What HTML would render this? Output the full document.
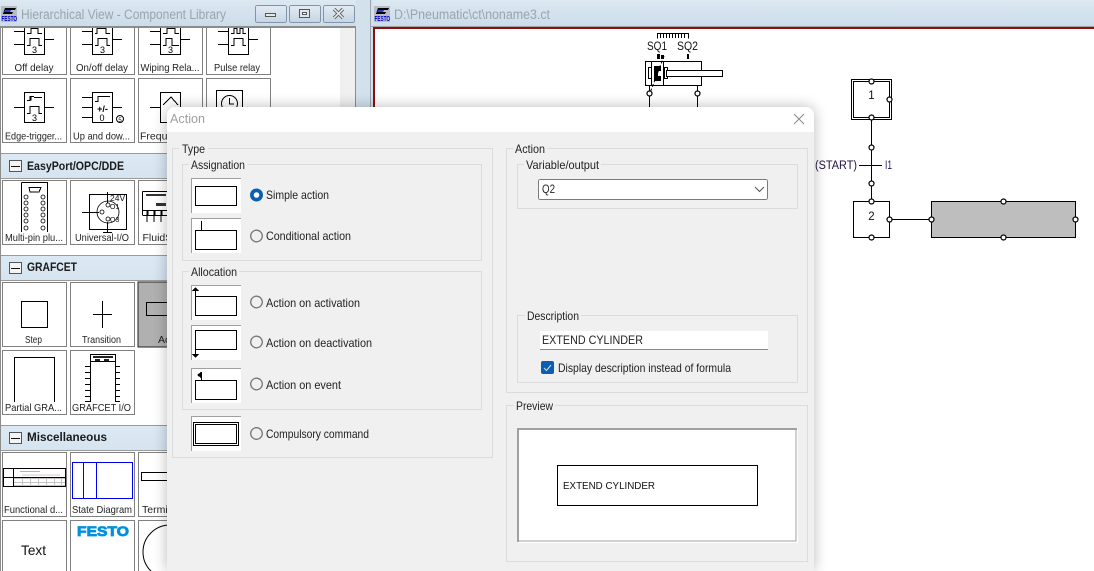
<!DOCTYPE html>
<html><head><meta charset="utf-8">
<style>
html,body{margin:0;padding:0;width:1094px;height:571px;overflow:hidden;background:#fff}
#root{position:absolute;left:0;top:0;width:1094px;height:571px;overflow:hidden}
svg{position:absolute;left:0;top:0}
text{font-family:"Liberation Sans",sans-serif;fill:#111}
.l{font-size:10.5px;text-anchor:middle;fill:#222}
.h{font-size:11.5px;font-weight:bold;fill:#1a1a1a}
.t{font-size:13.5px;fill:#9aa4ac}
.d{font-size:12px;fill:#222}
.w{fill:none;stroke:#000;stroke-width:1}
.s{font-size:9px;fill:#000;text-anchor:middle}
.c{fill:#fff;stroke:#808080;stroke-width:1}
.g{fill:none;stroke:#dcdcdc;stroke-width:1}
.o{fill:#fff;stroke:#000;stroke-width:1}
.p{fill:#fff;stroke:#000;stroke-width:1.2}
.bk{fill:#f0f0f0}
.ic{fill:#fff}
.b{fill:none;stroke:#a0a0a0;stroke-width:1}
.rd{fill:#f0f0f0;stroke:#777;stroke-width:1.3}
#dlg{position:absolute;left:167px;top:107px;width:647px;height:464px;background:#f0f0f0;border-radius:8px 8px 0 0;box-shadow:0 0 14px rgba(0,0,0,.28)}
#dlg div{position:absolute;left:0;top:0;width:647px;height:25px;background:#fff;border-radius:8px 8px 0 0}
</style></head>
<body>
<div id="root">
<svg width="1094" height="571" viewBox="0 0 1094 571" shape-rendering="crispEdges">
<defs>
<linearGradient id="tb" x1="0" y1="0" x2="0" y2="1"><stop offset="0" stop-color="#dce8f2"/><stop offset="1" stop-color="#cbdcea"/></linearGradient>
<linearGradient id="hd" x1="0" y1="0" x2="0" y2="1"><stop offset="0" stop-color="#dce9f4"/><stop offset="1" stop-color="#d6e4f0"/></linearGradient>
<linearGradient id="bt" x1="0" y1="0" x2="0" y2="1"><stop offset="0" stop-color="#e2ebf3"/><stop offset="1" stop-color="#c5d5e4"/></linearGradient>
</defs>
<!-- frames -->
<rect x="0" y="0" width="1094" height="27" fill="url(#tb)"/>
<rect x="356" y="0" width="17" height="571" fill="#d3e1ed"/>
<rect x="0" y="27" width="356" height="544" fill="#fff"/>
<rect x="340" y="28" width="16" height="543" fill="#f0f0f0"/>
<rect x="0" y="26" width="356" height="2" fill="#8c8c8c"/>
<rect x="0" y="27" width="1" height="544" fill="#8c8c8c"/>
<rect x="355" y="27" width="1" height="544" fill="#8c8c8c"/>
<rect x="370" y="0" width="1" height="571" fill="#9aa5ae"/>
<rect x="371" y="26" width="723" height="1" fill="#a0a0a0"/>
<rect x="373" y="27" width="721" height="544" fill="#fff"/>
<rect x="373" y="27" width="721" height="2" fill="#8b0f0f"/>
<rect x="373" y="27" width="2" height="544" fill="#8b0f0f"/>

<!-- logos -->
<g>
<rect x="1" y="6" width="16" height="16" fill="#b8bcc2"/>
<path d="M5 8H16L15 10H8L7 12H13L12 14H3L5 8Z" fill="#000"/>
<path d="M5 10H11L10 12H4Z" fill="#2040c0"/>
<text x="1.5" y="21" font-size="7" font-weight="bold" style="fill:#0000d0" textLength="15.5" lengthAdjust="spacingAndGlyphs">FESTO</text>
<g transform="translate(373,0)">
<rect x="1" y="6" width="16" height="16" fill="#b8bcc2"/>
<path d="M5 8H16L15 10H8L7 12H13L12 14H3L5 8Z" fill="#000"/>
<path d="M5 10H11L10 12H4Z" fill="#2040c0"/>
<text x="1.5" y="21" font-size="7" font-weight="bold" style="fill:#0000d0" textLength="15.5" lengthAdjust="spacingAndGlyphs">FESTO</text>
</g>
</g>
<text class="t" x="21" y="19" textLength="205" lengthAdjust="spacingAndGlyphs">Hierarchical View - Component Library</text>
<text class="t" x="394" y="19" textLength="156" lengthAdjust="spacingAndGlyphs">D:\Pneumatic\ct\noname3.ct</text>
<!-- window buttons -->
<rect x="255.500" y="5.500" width="31" height="17" rx="2" fill="url(#bt)" stroke="#8393a8"/>
<rect x="289.500" y="5.500" width="31" height="17" rx="2" fill="url(#bt)" stroke="#8393a8"/>
<rect x="323.500" y="5.500" width="31" height="17" rx="2" fill="url(#bt)" stroke="#8393a8"/>
<rect x="265.500" y="13.500" width="10" height="3" fill="#e8e8e8" stroke="#555"/>
<rect x="299.500" y="9.500" width="10" height="8" fill="#dfe6ec" stroke="#555"/>
<rect x="302.500" y="12.500" width="4" height="2" fill="#fff" stroke="#555"/>
<path d="M334 9L343 18M343 9L334 18" stroke="#666" stroke-width="3.400" fill="none" shape-rendering="auto"/>
<path d="M334 9L343 18M343 9L334 18" stroke="#eee" stroke-width="1.500" fill="none" shape-rendering="auto"/>

<!-- row 1 -->
<g id="cells">
<path class="c" d="M2.500 28V74.500H66.500V28M70.500 28V74.500H134.500V28M138.500 28V74.500H202.500V28M206.500 28V74.500H270.500V28"/>
<rect class="c" x="2.500" y="78.500" width="64" height="64"/>
<rect class="c" x="70.500" y="78.500" width="64" height="64"/>
<rect class="c" x="138.500" y="78.500" width="64" height="64"/>
<rect class="c" x="206.500" y="78.500" width="64" height="64"/>

<path class="w" d="M24.500 28V54.500H44.500V28M14 31.500H24M14 44.500H24M45 39.500H54M27 33.500H31V28.500H38V33.500H42M27 45.500H30V38.500H39V45.500H42"/>
<text class="s" x="34.500" y="53">3</text>
<path class="w" d="M92.500 28V54.500H112.500V28M82 31.500H92M82 44.500H92M113 39.500H122M95 33.500H97V28.500H106V33.500H110M95 45.500H98V38.500H107V45.500H110"/>
<text class="s" x="102.500" y="53">3</text>
<path class="w" d="M160.500 28V54.500H180.500V28M150 31.500H160M150 44.500H160M181 39.500H190M163 33.500H167V28.500H175V33.500H179M163 45.500H166V38.500H172V45.500H179"/>
<text class="s" x="170.500" y="53">3</text>
<path class="w" d="M228.500 28V54.500H248.500V28M218 31.500H228M218 44.500H228M249 39.500H258M231 33.500H234V28.500H237V33.500H240V28.500H243V33.500H246M231 45.500H234V38.500H243V45.500H246"/>

<text class="l" x="34" y="71" textLength="39" lengthAdjust="spacingAndGlyphs">Off delay</text>
<text class="l" x="102" y="71" textLength="52" lengthAdjust="spacingAndGlyphs">On/off delay</text>
<text class="l" x="170" y="71" textLength="59" lengthAdjust="spacingAndGlyphs">Wiping Rela...</text>
<text class="l" x="237" y="71" textLength="46" lengthAdjust="spacingAndGlyphs">Pulse relay</text>

<path class="w" d="M24.500 92.500H44.500V122.500H24.500ZM14 107.500H24M45 107.500H54M27 100.500H30V96.500H34M31 96.500V100.500M34 97.500H42M27 113.500H30V106.500H39V113.500H42"/>
<text class="s" x="34.500" y="121">3</text>
<path class="w" d="M92.500 92.500H112.500V122.500H92.500ZM82 97.500H92M82 107.500H92M82 117.500H92M113 107.500H122M95 101.500H98V96.500H110"/>
<text class="s" x="102.500" y="112" font-weight="bold">+/-</text>
<text class="s" x="102" y="121">0</text>
<circle cx="120" cy="119" r="3.500" fill="none" stroke="#000" shape-rendering="auto"/>
<text x="120" y="122" font-size="6" text-anchor="middle">5</text>
<path class="w" d="M160.500 92.500H180.500V122.500H160.500ZM150 107.500H160M163 105L171 97L178 105"/>
<rect class="o" x="216.500" y="90.500" width="26" height="30"/>
<circle cx="229.500" cy="103.500" r="8" fill="none" stroke="#000" shape-rendering="auto"/>
<path class="w" d="M229.500 98V104H234"/>
<text class="l" x="33.500" y="139.500" textLength="57" lengthAdjust="spacingAndGlyphs">Edge-trigger...</text>
<text class="l" x="101.500" y="139.500" textLength="57" lengthAdjust="spacingAndGlyphs">Up and dow...</text>
<text class="l" x="140" y="139.500" style="text-anchor:start">Frequency...</text>

<!-- EasyPort header -->
<rect x="1" y="153" width="339" height="26" fill="url(#hd)"/>
<path d="M1 153.500H340M1 178.500H340" stroke="#9a9a9a"/>
<rect x="9.500" y="160.500" width="12" height="11" fill="#f4f4f4" stroke="#555"/>
<path d="M11 166.500H20" stroke="#111"/>
<text class="h" x="27" y="170" textLength="97" lengthAdjust="spacingAndGlyphs">EasyPort/OPC/DDE</text>

<rect class="c" x="2.500" y="180.500" width="64" height="64"/>
<rect class="c" x="70.500" y="180.500" width="64" height="64"/>
<rect class="c" x="138.500" y="180.500" width="64" height="64"/>
<path class="w" d="M21.500 182.500H47.500V232M21.500 182.500V232M29 187.500H41L39 192H30Z"/>
<g fill="none" stroke="#000" stroke-width=".8" shape-rendering="auto">
<circle cx="26" cy="197" r="2"/><circle cx="26" cy="203" r="2"/><circle cx="26" cy="209" r="2"/><circle cx="26" cy="215" r="2"/><circle cx="26" cy="221" r="2"/><circle cx="26" cy="228" r="2"/>
<circle cx="43" cy="197" r="2"/><circle cx="43" cy="203" r="2"/><circle cx="43" cy="209" r="2"/><circle cx="43" cy="215" r="2"/><circle cx="43" cy="221" r="2"/><circle cx="43" cy="228" r="2"/>
<circle cx="108" cy="212" r="11"/><circle cx="102" cy="212" r="2"/><circle cx="108" cy="205" r="2"/><circle cx="108" cy="219" r="2"/>
</g>
<path class="w" d="M89.500 194.500H126.500V229.500H89.500ZM82 212.500H99M107.500 192V203M107.500 222V232M103 232.500H112"/>
<text x="110" y="201" font-size="8.500">24V</text>
<text x="110" y="209" font-size="7">O1</text>
<text x="110" y="222" font-size="7">O3</text>
<text class="l" x="34" y="241" textLength="58" lengthAdjust="spacingAndGlyphs">Multi-pin plu...</text>
<text class="l" x="102" y="241" textLength="54" lengthAdjust="spacingAndGlyphs">Universal-I/O</text>
<text class="l" x="142.500" y="241" style="text-anchor:start">FluidSIM</text>
<path class="w" d="M142.500 191.500H167M142.500 191.500V215M142.500 215.500H167M142.500 210.500H167M147 211V222M154 211V222M161 211V222M148 210V215M155 210V215M162 210V215"/>
<rect x="146" y="194" width="20" height="2" fill="#333"/>
<rect x="156" y="203" width="10" height="3" fill="#333"/>

<!-- GRAFCET -->
<rect x="1" y="255" width="339" height="26" fill="url(#hd)"/>
<path d="M1 255.500H340M1 280.500H340" stroke="#9a9a9a"/>
<rect x="9.500" y="262.500" width="12" height="11" fill="#f4f4f4" stroke="#555"/>
<path d="M11 268.500H20" stroke="#111"/>
<text class="h" x="27" y="271" textLength="50" lengthAdjust="spacingAndGlyphs">GRAFCET</text>
<rect class="c" x="2.500" y="282.500" width="64" height="64"/>
<rect class="c" x="70.500" y="282.500" width="64" height="64"/>
<rect x="138" y="282" width="65" height="65" fill="#b0b0b0" stroke="#222"/>
<rect class="o" x="21.500" y="301.500" width="26" height="26"/>
<path class="w" d="M102.500 301V328M93 314.500H112"/>
<rect x="146.500" y="302.500" width="40" height="13" fill="#b0b0b0" stroke="#000"/>
<text class="l" x="33.500" y="343" textLength="17" lengthAdjust="spacingAndGlyphs">Step</text>
<text class="l" x="101.500" y="343" textLength="39" lengthAdjust="spacingAndGlyphs">Transition</text>
<text class="l" x="158" y="343" style="text-anchor:start">Action</text>
<rect class="c" x="2.500" y="350.500" width="64" height="64"/>
<rect class="c" x="70.500" y="350.500" width="64" height="64"/>
<path class="w" d="M14.500 402V357.500H54.500V402"/>
<path class="w" d="M90.500 402V354.500H115.500V402M90.500 361.500H115.500M85 366.500H90M85 372.500H90M85 378.500H90M85 384.500H90M85 390.500H90M85 396.500H90M85 401.500H90M115 366.500H120M115 372.500H120M115 378.500H120M115 384.500H120M115 390.500H120M115 396.500H120M115 401.500H120"/>
<rect x="93" y="356" width="20" height="2" fill="#222"/>
<rect x="95" y="359" width="5" height="2" fill="#222"/>
<rect x="104" y="359" width="5" height="2" fill="#222"/>
<text class="l" x="33.500" y="411" textLength="57" lengthAdjust="spacingAndGlyphs">Partial GRA...</text>
<text class="l" x="101.500" y="411" textLength="59" lengthAdjust="spacingAndGlyphs">GRAFCET I/O</text>

<!-- Misc -->
<rect x="1" y="425" width="339" height="26" fill="url(#hd)"/>
<path d="M1 425.500H340M1 450.500H340" stroke="#9a9a9a"/>
<rect x="9.500" y="432.500" width="12" height="11" fill="#f4f4f4" stroke="#555"/>
<path d="M11 438.500H20" stroke="#111"/>
<text class="h" x="27" y="441" textLength="80" lengthAdjust="spacingAndGlyphs">Miscellaneous</text>
<rect class="c" x="2.500" y="452.500" width="64" height="64"/>
<rect class="c" x="70.500" y="452.500" width="64" height="64"/>
<rect class="c" x="138.500" y="452.500" width="64" height="64"/>
<path d="M14 482.500H65M14 485.500H65M14 478.500H65M22.500 477V487M30.500 477V487M38.500 477V487M46.500 477V487M54.500 477V487M61.500 477V487" stroke="#c4c4c4" fill="none"/>
<rect x="3.500" y="468.500" width="62" height="18" fill="none" stroke="#000" stroke-width="1"/>
<path d="M3 477.500H66M13.500 468V487" stroke="#000"/>
<rect x="20" y="471" width="20" height="1" fill="#c9a9b9"/>
<rect x="22" y="474.500" width="38" height="1" fill="#d8c8d0"/>
<rect x="72.500" y="462.500" width="60" height="36" fill="none" stroke="#0000f0"/>
<path d="M83.500 462V499M96.500 462V499" stroke="#0000f0"/>
<rect x="141.500" y="472.500" width="40" height="8" class="o"/>
<text class="l" x="33.500" y="513" textLength="59" lengthAdjust="spacingAndGlyphs">Functional d...</text>
<text class="l" x="102" y="513" textLength="60" lengthAdjust="spacingAndGlyphs">State Diagram</text>
<text class="l" x="142" y="513" style="text-anchor:start">Terminal</text>
<path class="c" d="M2.500 571V520.500H66.500V571M70.500 571V520.500H134.500V571M138.500 571V520.500H202.500V571"/>
<text x="21" y="555" font-size="14" textLength="25" lengthAdjust="spacingAndGlyphs">Text</text>
<text x="77" y="536" font-size="13.500" font-weight="bold" style="fill:#0091dc;stroke:#0091dc;stroke-width:.8" textLength="52" lengthAdjust="spacingAndGlyphs">FESTO</text>
<circle cx="170" cy="552" r="27" fill="none" stroke="#000" shape-rendering="auto"/>
</g>

<!-- Canvas: cylinder -->
<path class="w" d="M657.500 38.500V33.500H688.500V38.500M660.500 34V38M663.500 34V38M666.500 34V38M669.500 34V38M672.500 34V38M675.500 34V38M678.500 34V38M681.500 34V38M684.500 34V38"/>
<text x="647" y="50" font-size="12" textLength="20" lengthAdjust="spacingAndGlyphs" style="fill:#111">SQ1</text>
<text x="677" y="50" font-size="12" textLength="21" lengthAdjust="spacingAndGlyphs" style="fill:#111">SQ2</text>
<rect x="657" y="54" width="3" height="5" fill="#000"/>
<rect x="661" y="55" width="3" height="4" fill="#000"/>
<rect x="687" y="54" width="2" height="5" fill="#000"/>
<rect class="o" x="645.500" y="61.500" width="56" height="24"/>
<path class="w" d="M651.500 62V85M663.500 62V85"/>
<rect class="o" x="648.500" y="67.500" width="3" height="11"/>
<rect class="o" x="664.500" y="67.500" width="3" height="11"/>
<rect class="o" x="666.500" y="70.500" width="56" height="6"/>
<path d="M654 66H661V71H658V76H661V81H654Z" fill="#000"/>
<path d="M664 56L650 93" stroke="#000" stroke-dasharray="3 2" shape-rendering="auto"/>
<path class="w" d="M649.500 85V107M697.500 85V107"/>
<g shape-rendering="auto"><circle class="p" cx="649.500" cy="93.500" r="2.500"/><circle class="p" cx="697.500" cy="93.500" r="2.500"/></g>

<!-- GRAFCET diagram -->
<rect class="o" x="851.500" y="79.500" width="40" height="40"/>
<rect class="o" x="853.500" y="81.500" width="36" height="36"/>
<path d="M871.500 118V201" stroke="#000" stroke-width="1"/>
<path class="w" d="M859 165.500H882M889.500 219.500H931.500"/>
<rect class="o" x="853.500" y="201.500" width="36" height="36"/>
<rect x="931.500" y="201.500" width="144" height="36" fill="#bebebe" stroke="#000"/>
<text x="871.500" y="99" font-size="11.500" text-anchor="middle">1</text>
<text x="871.500" y="220" font-size="11.500" text-anchor="middle">2</text>
<text x="815" y="169" font-size="11.500" textLength="42" lengthAdjust="spacingAndGlyphs" style="fill:#201040">(START)</text>
<text x="885" y="169" font-size="11.500" textLength="7" lengthAdjust="spacingAndGlyphs" style="fill:#201060">I1</text>
<g shape-rendering="auto">
<circle class="p" cx="871.500" cy="81.500" r="2.500"/><circle class="p" cx="889.500" cy="99.500" r="2.500"/><circle class="p" cx="871.500" cy="117.500" r="2.500"/>
<circle class="p" cx="871.500" cy="147.500" r="2.500"/><circle class="p" cx="871.500" cy="183.500" r="2.500"/>
<circle class="p" cx="871.500" cy="201.500" r="2.500"/><circle class="p" cx="889.500" cy="219.500" r="2.500"/><circle class="p" cx="871.500" cy="237.500" r="2.500"/>
<circle class="p" cx="931.500" cy="219.500" r="2.500"/><circle class="p" cx="1003.500" cy="201.500" r="2.500"/><circle class="p" cx="1075.500" cy="219.500" r="2.500"/><circle class="p" cx="1003.500" cy="237.500" r="2.500"/>
</g>
</svg>

<div id="dlg"><div></div></div>

<svg width="1094" height="571" viewBox="0 0 1094 571" shape-rendering="crispEdges">
<text x="170" y="123" font-size="13" textLength="35" lengthAdjust="spacingAndGlyphs" style="fill:#9e9e9e">Action</text>
<path d="M794 114L804 124M804 114L794 124" stroke="#8a8a8a" fill="none" shape-rendering="auto"/>

<!-- Type group -->
<rect class="g" x="172.500" y="148.500" width="320" height="309"/>
<rect class="bk" x="179" y="143" width="29" height="12"/>
<text class="d" x="182" y="153" textLength="23" lengthAdjust="spacingAndGlyphs">Type</text>
<rect class="g" x="182.500" y="164.500" width="299" height="96"/>
<rect class="bk" x="189" y="159" width="58" height="12"/>
<text class="d" x="191" y="169" textLength="54" lengthAdjust="spacingAndGlyphs">Assignation</text>

<rect class="ic" x="191" y="178" width="50" height="35"/><path class="b" d="M191.500 213V178.500H241"/>
<rect class="o" x="195.500" y="186.500" width="41" height="19"/>
<rect class="ic" x="191" y="218" width="50" height="35"/><path class="b" d="M191.500 253V218.500H241"/>
<rect class="o" x="195.500" y="230.500" width="41" height="19"/>
<path class="w" d="M201.500 221V230"/>

<g shape-rendering="auto">
<circle cx="256.500" cy="195" r="6.500" fill="#0a5fb4"/><circle cx="256.500" cy="195" r="2.800" fill="#fff"/>
<circle class="rd" cx="256.500" cy="236" r="5.800"/>
<circle class="rd" cx="256.500" cy="302" r="5.800"/>
<circle class="rd" cx="256.500" cy="342" r="5.800"/>
<circle class="rd" cx="256.500" cy="384" r="5.800"/>
<circle class="rd" cx="256.500" cy="433.500" r="5.800"/>
</g>
<text class="d" x="266" y="199" textLength="63" lengthAdjust="spacingAndGlyphs">Simple action</text>
<text class="d" x="266" y="240" textLength="85" lengthAdjust="spacingAndGlyphs">Conditional action</text>

<rect class="g" x="182.500" y="271.500" width="299" height="138"/>
<rect class="bk" x="189" y="266" width="50" height="12"/>
<text class="d" x="191" y="276" textLength="46" lengthAdjust="spacingAndGlyphs">Allocation</text>

<rect class="ic" x="191" y="285" width="50" height="35"/><path class="b" d="M191.500 320V285.500H241"/>
<rect class="o" x="195.500" y="296.500" width="41" height="19"/>
<path class="w" d="M195.500 291V296"/><path d="M192 291H199L195.500 287Z" fill="#000"/>
<rect class="ic" x="191" y="325" width="50" height="35"/><path class="b" d="M191.500 360V325.500H241"/>
<rect class="o" x="195.500" y="330.500" width="41" height="19"/>
<path class="w" d="M195.500 350V354"/><path d="M192 354H199L195.500 358Z" fill="#000"/>
<rect class="ic" x="191" y="368" width="50" height="35"/><path class="b" d="M191.500 403V368.500H241"/>
<rect class="o" x="195.500" y="380.500" width="41" height="19"/>
<path class="w" d="M201.500 372V380"/><path d="M201 372V378L197 375Z" fill="#000"/>
<rect class="ic" x="191" y="416" width="50" height="35"/><path class="b" d="M191.500 451V416.500H241"/>
<rect class="o" x="193.500" y="422.500" width="45" height="23"/>
<rect class="o" x="195.500" y="424.500" width="41" height="19"/>

<text class="d" x="266" y="307" textLength="94" lengthAdjust="spacingAndGlyphs">Action on activation</text>
<text class="d" x="266" y="347" textLength="106" lengthAdjust="spacingAndGlyphs">Action on deactivation</text>
<text class="d" x="266" y="389" textLength="75" lengthAdjust="spacingAndGlyphs">Action on event</text>
<text class="d" x="266" y="438" textLength="103" lengthAdjust="spacingAndGlyphs">Compulsory command</text>

<!-- Action group -->
<rect class="g" x="506.500" y="148.500" width="301" height="244"/>
<rect class="bk" x="513" y="143" width="34" height="12"/>
<text class="d" x="515" y="153" textLength="30" lengthAdjust="spacingAndGlyphs">Action</text>
<rect class="g" x="517.500" y="164.500" width="280" height="44"/>
<rect class="bk" x="524" y="159" width="77" height="12"/>
<text class="d" x="526" y="169" textLength="73" lengthAdjust="spacingAndGlyphs">Variable/output</text>
<rect x="538.500" y="179.500" width="229" height="20" rx="2" fill="#fff" stroke="#7a7a7a"/>
<text class="d" x="542" y="193" textLength="13" lengthAdjust="spacingAndGlyphs">Q2</text>
<path d="M755 187L759.500 191.500L764 187" fill="none" stroke="#555" shape-rendering="auto"/>

<rect class="g" x="517.500" y="315.500" width="280" height="67"/>
<rect class="bk" x="525" y="310" width="56" height="12"/>
<text class="d" x="527" y="320" textLength="52" lengthAdjust="spacingAndGlyphs">Description</text>
<rect x="540" y="331" width="228" height="19" fill="#fff"/>
<rect x="540" y="349" width="228" height="1" fill="#8a8a8a"/>
<text class="d" x="542" y="344" textLength="101" lengthAdjust="spacingAndGlyphs">EXTEND CYLINDER</text>
<rect x="541" y="361" width="13" height="13" rx="2" fill="#0a5fb4" shape-rendering="auto"/>
<path d="M544 368L546.500 370.500L551 365" fill="none" stroke="#cfe0f2" shape-rendering="auto"/>
<text class="d" x="558" y="372" textLength="173" lengthAdjust="spacingAndGlyphs">Display description instead of formula</text>

<rect class="g" x="506.500" y="405.500" width="301" height="156"/>
<rect class="bk" x="514" y="400" width="41" height="12"/>
<text class="d" x="516" y="410" textLength="37" lengthAdjust="spacingAndGlyphs">Preview</text>
<rect x="517" y="428" width="281" height="115" fill="#fff"/>
<path d="M518.500 541V429.500H796V541H518" fill="none" stroke="#a0a0a0"/>
<rect x="517" y="428" width="2" height="114" fill="#a0a0a0"/>
<rect x="517" y="428" width="280" height="2" fill="#a0a0a0"/>
<rect class="o" x="557.500" y="465.500" width="200" height="40"/>
<text x="563" y="489" font-size="10.500" textLength="92" lengthAdjust="spacingAndGlyphs" style="fill:#111">EXTEND CYLINDER</text>
</svg>
</div>
</body></html>
